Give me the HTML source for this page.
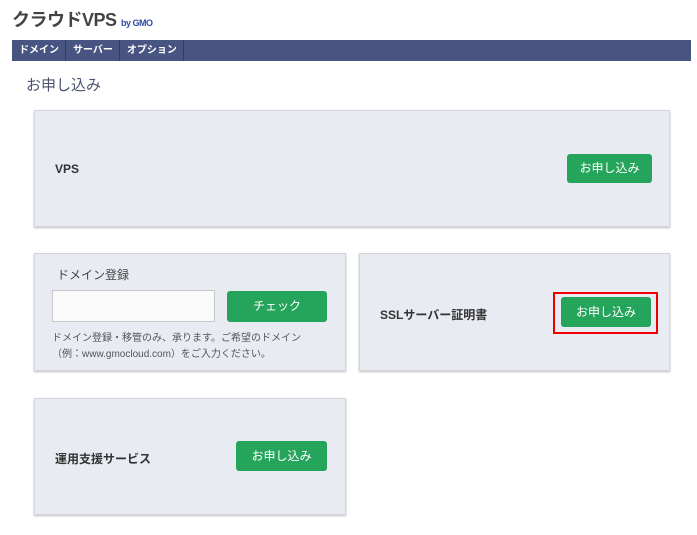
<!DOCTYPE html>
<html><head><meta charset="utf-8"><style>
body{margin:0;width:697px;height:535px;background:#fff;font-family:"Liberation Sans","Noto Sans CJK JP",sans-serif;position:relative;overflow:hidden;color:#333}
.a{position:absolute}
.logo{left:12px;top:6px;font-size:18px;font-weight:bold;color:#444;letter-spacing:-0.5px}
.logo small{font-size:9px;color:#2a4aa8;font-weight:bold}
.nav{left:12px;top:40px;width:679px;height:21px;background:#485481}
.nav span{float:left;height:21px;line-height:21px;color:#fff;font-size:10px;font-weight:bold;padding:0 6px 0 7px;border-right:1px solid #323c62}
.box{background:#e9ebf3;border:1px solid #d2d4de;box-shadow:0 1px 2px rgba(0,0,0,.25)}
.btn{background:#25a55b;color:#fff;border-radius:3px;font-size:12px;text-align:center}
.t{font-size:12px;font-weight:bold;color:#333}
</style></head><body>
<div class="a logo">クラウドVPS <small>by GMO</small></div>
<div class="a nav"><span>ドメイン</span><span>サーバー</span><span>オプション</span></div>
<div class="a" style="left:26px;top:74px;font-size:15px;color:#4a5270">お申し込み</div>

<div class="a box" style="left:34px;top:110px;width:634px;height:115px"></div>
<div class="a t" style="left:55px;top:162px">VPS</div>
<div class="a btn" style="left:567px;top:154px;width:85px;height:29px;line-height:29px">お申し込み</div>

<div class="a box" style="left:34px;top:253px;width:310px;height:116px"></div>
<div class="a" style="left:57px;top:266px;font-size:12px;color:#444">ドメイン登録</div>
<div class="a" style="left:52px;top:290px;width:161px;height:30px;background:#fafafa;border:1px solid #c8c8c8"></div>
<div class="a btn" style="left:227px;top:291px;width:100px;height:31px;line-height:31px">チェック</div>
<div class="a" style="left:52px;top:331px;font-size:10px;color:#555;line-height:16px">ドメイン登録・移管のみ、承ります。ご希望のドメイン<br>（例：www.gmocloud.com）をご入力ください。</div>

<div class="a box" style="left:359px;top:253px;width:309px;height:116px"></div>
<div class="a t" style="left:380px;top:306px">SSLサーバー証明書</div>
<div class="a" style="left:553px;top:292px;width:101px;height:38px;border:2px solid #e00"></div>
<div class="a btn" style="left:561px;top:297px;width:90px;height:30px;line-height:30px">お申し込み</div>

<div class="a box" style="left:34px;top:398px;width:310px;height:115px"></div>
<div class="a t" style="left:55px;top:450px">運用支援サービス</div>
<div class="a btn" style="left:236px;top:441px;width:91px;height:30px;line-height:30px">お申し込み</div>
</body></html>
